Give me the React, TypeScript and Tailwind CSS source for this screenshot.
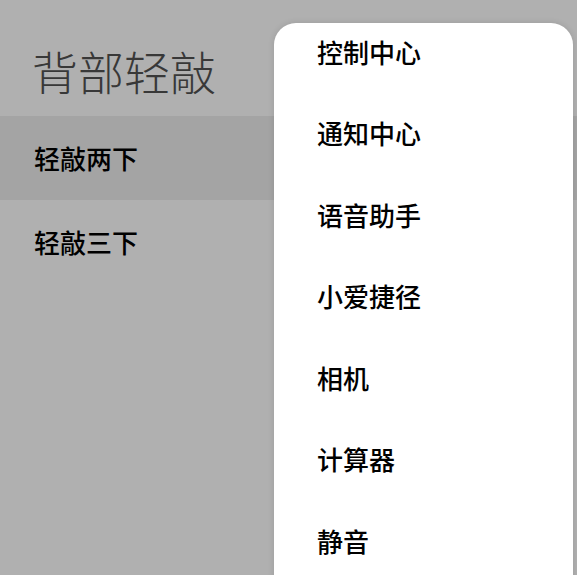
import React from "react";

const menu = ["控制中心", "通知中心", "语音助手", "小爱捷径", "相机", "计算器", "静音"];

export default function App() {
  const font = { fontFamily: '"Noto Sans CJK SC", "Noto Sans", sans-serif' };
  return (
    <div className="relative w-[577px] h-[575px] overflow-hidden bg-[#b0b0b0]" style={font}>
      <div className="flex flex-col">
        <div className="h-[116px] flex items-center pl-[32px] pt-[24px]">
          <span className="text-[46px] leading-none font-extralight text-[#383838]">背部轻敲</span>
        </div>
        <div className="h-[84px] flex items-center pl-[34px] bg-[#a4a4a4]">
          <span className="text-[26px] leading-none font-medium text-black">轻敲两下</span>
        </div>
        <div className="h-[84px] flex items-center pl-[34px]">
          <span className="text-[26px] leading-none font-medium text-black">轻敲三下</span>
        </div>
      </div>
      <div className="absolute left-[274px] top-[23px] w-[299px] h-[600px] bg-white rounded-t-[22px] overflow-hidden shadow-[0_0_6px_rgba(0,0,0,0.12)]">
        <div className="flex flex-col -mt-[12px] pl-[43px]">
          {menu.map((m) => (
            <div key={m} className="h-[81.5px] flex items-center">
              <span className="text-[26px] leading-none font-medium text-black">{m}</span>
            </div>
          ))}
        </div>
      </div>
    </div>
  );
}
